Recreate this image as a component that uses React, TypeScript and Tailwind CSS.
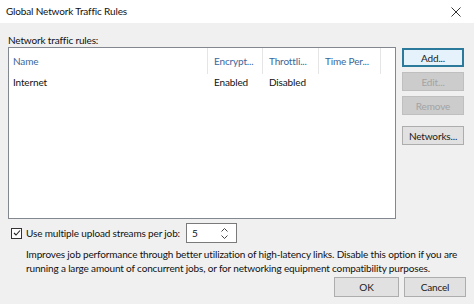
import React from "react";

const font = { fontFamily: 'Lato, "Segoe UI", sans-serif' };

function Btn({
  children,
  disabled,
  focused,
  className = "",
}: {
  children: React.ReactNode;
  disabled?: boolean;
  focused?: boolean;
  className?: string;
}) {
  return (
    <div
      className={`flex h-[19px] items-center justify-center border text-[10px] leading-none ${
        disabled
          ? "border-[#bfbfbf] bg-[#cccccc] text-[#a3a3a3]"
          : focused
          ? "border-[#2b7a9c] bg-[#e5f1fb] text-[#1a1a1a] shadow-[inset_0_0_0_1px_#2b7a9c]"
          : "border-[#adadad] bg-[#e1e1e1] text-[#1a1a1a]"
      } ${className}`}
    >
      {children}
    </div>
  );
}

export default function App() {
  const cols = [
    { name: "Name", w: "w-[199px]", pl: "pl-[4px]" },
    { name: "Encrypt...", w: "w-[55px]", pl: "pl-[6px]" },
    { name: "Throttli...", w: "w-[56px]", pl: "pl-[6px]" },
    { name: "Time Per...", w: "w-[62px]", pl: "pl-[6px]" },
  ];

  return (
    <div
      className="flex h-[304px] w-[474px] flex-col overflow-hidden bg-[#f0f0f0] tracking-[-0.15px] text-[#111]"
      style={font}
    >
      {/* title bar */}
      <div className="flex h-[23px] shrink-0 items-center justify-between bg-white pl-[6px] pr-[13px] text-[10px]">
        <span>Global Network Traffic Rules</span>
        <svg width="10" height="10" viewBox="0 0 10 10" className="stroke-[#333]">
          <path d="M0.5 0.5L9.5 9.5M9.5 0.5L0.5 9.5" strokeWidth="1" fill="none" />
        </svg>
      </div>

      <div className="flex flex-1 flex-col px-[8px] pt-[11px] text-[10px]">
        <div className="leading-[13px]">Network traffic rules:</div>

        <div className="flex gap-[6px]">
          {/* list view */}
          <div className="h-[172px] w-[388px] border border-[#828790] bg-white">
            <div className="flex h-[26px] items-center text-[#3a679a]">
              {cols.map((c) => (
                <div
                  key={c.name}
                  className={`${c.w} ${c.pl} flex h-full shrink-0 items-center overflow-hidden whitespace-nowrap border-r border-[#e5e5e5]`}
                >
                  {c.name}
                </div>
              ))}
            </div>
            <div className="flex h-[17px] items-center">
              <div className="w-[199px] shrink-0 pl-[4px]">Internet</div>
              <div className="w-[55px] shrink-0 pl-[6px]">Enabled</div>
              <div className="w-[56px] shrink-0 pl-[6px]">Disabled</div>
            </div>
          </div>

          {/* side buttons */}
          <div className="flex w-[62px] flex-col pt-[1px]">
            <Btn focused>Add...</Btn>
            <Btn disabled className="mt-[5px]">Edit...</Btn>
            <Btn disabled className="mt-[5px]">Remove</Btn>
            <Btn className="mt-[11px]">Networks...</Btn>
          </div>
        </div>

        {/* checkbox row */}
        <div className="mt-[4px] flex items-center">
          <div className="ml-[3px] flex h-[11px] w-[11px] items-center justify-center border border-[#333] bg-white">
            <svg width="8" height="8" viewBox="0 0 8 8">
              <path d="M1 4L3 6L7 1.5" stroke="#222" strokeWidth="1.1" fill="none" />
            </svg>
          </div>
          <span className="ml-[4px]">Use multiple upload streams per job:</span>
          <div className="ml-[6px] flex h-[20px] w-[51px] items-center justify-between border border-[#7a7a7a] bg-white pl-[5px] pr-[8px]">
            <span>5</span>
            <div className="flex flex-col gap-[3px]">
              <svg width="7" height="4" viewBox="0 0 7 4">
                <path d="M0.5 3.5L3.5 0.5L6.5 3.5" stroke="#444" fill="none" />
              </svg>
              <svg width="7" height="4" viewBox="0 0 7 4">
                <path d="M0.5 0.5L3.5 3.5L6.5 0.5" stroke="#444" fill="none" />
              </svg>
            </div>
          </div>
        </div>

        <p className="mt-[4px] whitespace-nowrap pl-[18px] leading-[14px]">
          Improves job performance through better utilization of high-latency links. Disable this option if you are
          <br />
          running a large amount of concurrent jobs, or for networking equipment compatibility purposes.
        </p>

        <div className="mt-[2px] flex justify-end gap-[5px]">
          <Btn className="h-[20px] w-[65px]">OK</Btn>
          <Btn className="h-[20px] w-[62px]">Cancel</Btn>
        </div>
      </div>
    </div>
  );
}
